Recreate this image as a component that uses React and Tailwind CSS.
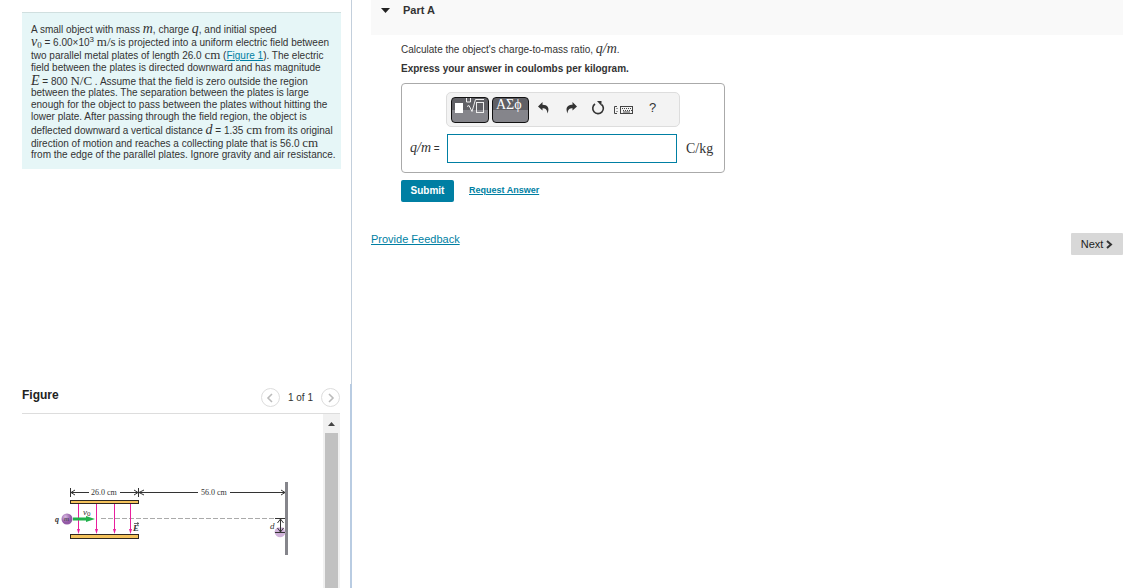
import React from "react";

function M({ children }) {
  return <i className="font-['Liberation_Serif',serif] text-[14px]">{children}</i>;
}
function U({ children }) {
  return <span className="font-['Liberation_Serif',serif] text-[13px]">{children}</span>;
}
function Line({ math, children }) {
  return <span className={math ? "block h-[13px] leading-[13px]" : "block h-3 leading-3"}>{children}</span>;
}

function Problem() {
  return (
    <section className="mr-[10px] ml-[22px] border-t border-[#d0dfdf] bg-[#e6f6f7] px-[9px] pt-[9px] pb-[8px] text-[10px] whitespace-nowrap text-[#333]">
      <p>
        <Line math>A small object with mass <M>m</M>, charge <M>q</M>, and initial speed </Line>
        <Line math>
          <M>v<sub className="text-[9px] leading-none not-italic">0</sub></M> = 6.00×10<sup className="text-[8px] leading-none">3</sup> <U>m/s</U> is projected into a uniform electric field between{" "}
        </Line>
        <Line math>
          two parallel metal plates of length 26.0 <U>cm</U> (<a href="#figure" className="text-[#007fa3] underline">Figure 1</a>). The electric{" "}
        </Line>
        <Line math>field between the plates is directed downward and has magnitude </Line>
        <Line math><M>E</M> = 800 <U>N/C</U> . Assume that the field is zero outside the region </Line>
        <Line>between the plates. The separation between the plates is large </Line>
        <Line>enough for the object to pass between the plates without hitting the </Line>
        <Line>lower plate. After passing through the field region, the object is </Line>
        <Line math>deflected downward a vertical distance <M>d</M> = 1.35 <U>cm</U> from its original </Line>
        <Line math>direction of motion and reaches a collecting plate that is 56.0 <U>cm</U> </Line>
        <Line>from the edge of the parallel plates. Ignore gravity and air resistance.</Line>
      </p>
    </section>
  );
}

function Diagram() {
  return (
    <svg width="260" height="90" viewBox="40 475 260 90" role="img" aria-label="Object moving between charged plates towards a collecting plate" className="mt-[61px] ml-[18px] shrink-0" fontFamily="'Liberation Serif', serif">
      <defs>
        <radialGradient id="ball" cx="35%" cy="30%">
          <stop offset="0" stopColor="#d6b8e0" />
          <stop offset="1" stopColor="#9258a5" />
        </radialGradient>
      </defs>
      <g stroke="#333" strokeWidth="1" fill="none">
        <path d="M70.5 488v9M138.500 488v9M71 492.500h18M120 492.500h18M139 492.500h59M230 492.500h55" />
        <path d="M75 490l-4 2.500 4 2.500M134 490l4 2.500-4 2.500M144 490l-5 2.500 5 2.500M281 490l4 2.500-4 2.500" />
      </g>
      <g fontSize="8" fill="#333">
        <text x="91" y="495">26.0 cm</text>
        <text x="201" y="495">56.0 cm</text>
      </g>
      <path d="M101 518.500H275" stroke="#aaa" strokeDasharray="5 2" />
      <g fill="#f4c25c" stroke="#302820">
        <rect x="70.500" y="500.500" width="68" height="3" />
        <rect x="70.500" y="534.500" width="68" height="4" />
      </g>
      <path d="M78.500 504v28M96.500 504v28M114.500 504v28M130.500 504v28" stroke="#e91e9c" />
      <path d="M77 529h3l-1.500 5zM95 529h3l-1.500 5zM113 529h3l-1.500 5zM129 529h3l-1.500 5z" fill="#e91e9c" />
      <circle cx="67" cy="519" r="5.500" fill="url(#ball)" />
      <path d="M73 519h15" stroke="#21b14b" strokeWidth="3" />
      <path d="M86 516l9 3-9 3z" fill="#21b14b" />
      <g fontStyle="italic" fontSize="8" fill="#333">
        <text x="64" y="521" fontSize="7">m</text>
        <text x="55" y="522" fontWeight="bold">q</text>
        <text x="83" y="515" fontSize="9">v<tspan fontSize="7" fontStyle="normal" dy="1">0</tspan></text>
        <text x="133" y="531" fontSize="9" fontWeight="bold">E</text>
        <text x="270" y="529" fontSize="9">d</text>
      </g>
      <path d="M134 523.500h4M137 522.500l2 1-2 1" stroke="#333" strokeWidth=".7" fill="none" />
      <rect x="285" y="482" width="3" height="73" fill="#85858b" />
      <path d="M274.500 532a5.500 5.500 0 0 1 3-4.500h6l2 5c-1 6.500-10 6.500-11-.5z" fill="#d0b2da" />
      <path d="M275 518.500h10M275 532.500h10M280.500 519v13M277.500 523l3-4 3 4M277.500 528l3 4 3-4" fill="none" stroke="#333" />
    </svg>
  );
}

function FigurePanel() {
  return (
    <section id="figure" className="flex grow flex-col border-r-2 border-[#b9cce2] pr-[10px] pl-[22px]">
      <header className="flex h-[30px] items-start justify-between border-b border-[#ddd]">
        <h2 className="pt-[3px] text-[12px] leading-4 font-bold text-[#222]">Figure</h2>
        <nav className="flex items-center gap-2 pt-1 text-[10px] text-[#333]">
          <button aria-label="Previous figure" className="flex size-[19px] items-center justify-center rounded-full border border-[#ddd]">
            <svg width="8" height="10" viewBox="0 0 8 10" fill="none" stroke="#bbb" strokeWidth="1.600"><path d="M6 1L2 5l4 4" /></svg>
          </button>
          <span>1 of 1</span>
          <button aria-label="Next figure" className="flex size-[19px] items-center justify-center rounded-full border border-[#ddd]">
            <svg width="8" height="10" viewBox="0 0 8 10" fill="none" stroke="#bbb" strokeWidth="1.600"><path d="M2 1l4 4-4 4" /></svg>
          </button>
        </nav>
      </header>
      <div className="flex grow justify-between">
        <Diagram />
        <div aria-hidden="true" className="flex w-[17px] shrink-0 flex-col bg-[#f1f1f1] px-[2px]">
          <div className="flex h-[19px] items-center justify-center">
            <svg width="7" height="4" viewBox="0 0 7 4"><path d="M0 4l3.500-4L7 4z" fill="#444" /></svg>
          </div>
          <div className="grow bg-[#c1c1c1]" />
        </div>
      </div>
    </section>
  );
}

const mathButton = "flex h-[26px] items-start rounded-[4px] border border-[#111] bg-linear-to-b from-[#606065] from-50% to-[#85858b] to-50% text-white";

function Toolbar() {
  return (
    <div className="flex h-[35px] items-center rounded-[5px] border border-[#ddd] bg-[#f3f3f3] pl-1 text-[#333]">
      <button aria-label="Templates" className={mathButton + " w-[38px] justify-center"}>
        <svg width="32" height="16" viewBox="0 0 32 16" fill="none" stroke="#eee">
          <rect x="1" y="5" width="8" height="10" fill="#fff" stroke="none" />
          <path d="M12.500 0v4h4V0M13 8.500l2-1 3 6 3.500-12H30" />
          <rect x="22.500" y="4.500" width="7" height="10" />
        </svg>
      </button>
      <button aria-label="Greek symbols" className={mathButton + " ml-[3px] w-[37px] pl-[3px] font-['Liberation_Serif',serif] text-[14px] leading-[14px]"}>ΑΣϕ</button>
      <button aria-label="Undo" className="-mt-[3px] ml-[9px]">
        <svg width="12" height="12" viewBox="0 0 12 12"><path d="M4.500 0L0 4.500l4.500 4V6.300c3 0 4.500 1 5 5.200C12 6 9.500 2.800 4.500 2.800z" fill="#333" /></svg>
      </button>
      <button aria-label="Redo" className="-mt-[3px] ml-4">
        <svg width="12" height="12" viewBox="0 0 12 12"><path d="M6.500 0L11 4.500l-4.500 4V6.300c-3 0-4.500 1-5 5.200C-1 6 1.500 2.800 6.500 2.800z" fill="#333" /></svg>
      </button>
      <button aria-label="Reset" className="-mt-[3px] ml-[13px]">
        <svg width="14" height="14" viewBox="0 0 14 14"><path d="M4 3a5.300 5.300 0 1 0 6.500.3" fill="none" stroke="#333" strokeWidth="1.600" /><path d="M6 0h4.500v5z" fill="#333" /></svg>
      </button>
      <button aria-label="Keyboard shortcuts" className="ml-[9px]">
        <svg width="20" height="10" viewBox="0 0 20 10" fill="none" stroke="#444"><path d="M3 1.500H.5v7H3" /><path d="M2.500 3.500h1M2.500 6.500h1" /><rect x="6.500" y="1.500" width="12" height="7" /><path d="M8 3.500h9M9 5.500h9" strokeDasharray="1 1" /><path d="M9 7h7" /></svg>
      </button>
      <button aria-label="Help" className="-mt-[3px] ml-[15px] text-[13px]">?</button>
    </div>
  );
}

export default function App() {
  return (
    <div className="flex min-h-screen bg-white font-['Liberation_Sans',Arial,sans-serif] text-[#333]">
      <aside className="flex w-[352px] shrink-0 flex-col">
        <div className="h-96 border-r border-[#c3cfdc] pt-3">
          <Problem />
        </div>
        <FigurePanel />
      </aside>
      <main className="min-w-0 grow pr-[2px] pl-[19px]">
        <h1 className="flex h-[35px] items-start bg-[#f9f9f9] pl-[10px] text-[11px] leading-5 font-bold text-[#333]">
          <button className="flex items-center gap-[13px]">
            <svg width="9" height="5" viewBox="0 0 9 5"><path d="M0 0h9L4.500 5z" fill="#222" /></svg>
            Part A
          </button>
        </h1>
        <form className="pt-1 pl-[30px] text-[10px]" onSubmit={(e) => e.preventDefault()}>
          <p className="h-5 leading-5">
            Calculate the object's charge-to-mass ratio, <M>q/m</M>.
          </p>
          <p className="h-6 leading-5 font-bold">Express your answer in coulombs per kilogram.</p>
          <div className="flex h-[90px] w-[324px] items-end rounded-[4px] border border-[#aaa] pb-[9px]">
            <label htmlFor="answer" className="w-[44px] pb-1 pl-2 text-[10px] leading-5 whitespace-nowrap">
              <M>q/m</M> =
            </label>
            <div className="flex w-[234px] flex-col gap-[7px]">
              <Toolbar />
              <input id="answer" type="text" className="ml-px h-[29px] w-[230px] border border-[#007fa3] bg-white px-2 text-sm outline-none" />
            </div>
            <span className="pb-1 pl-[6px] font-['Liberation_Serif',serif] text-[14px] leading-5">C/kg</span>
          </div>
          <div className="flex items-center gap-[15px] pt-[7px]">
            <button type="submit" className="h-[22px] w-[53px] rounded-[2px] bg-[#007fa3] pb-px text-[10px] font-bold text-white">Submit</button>
            <a href="#request" className="text-[9px] font-bold text-[#007fa3] underline">Request Answer</a>
          </div>
        </form>
        <div className="flex items-start justify-between pt-[31px]">
          <a href="#feedback" className="text-[11px] leading-3 text-[#007fa3] underline">Provide Feedback</a>
          <button className="flex h-[22px] w-[52px] items-center justify-center gap-[3px] rounded-[1px] bg-[#d8d8d8] text-[11px] text-[#222]">
            Next
            <svg width="7" height="9" viewBox="0 0 7 9" fill="none" stroke="#333" strokeWidth="2"><path d="M1 1l4 3.500L1 8" /></svg>
          </button>
        </div>
      </main>
    </div>
  );
}
